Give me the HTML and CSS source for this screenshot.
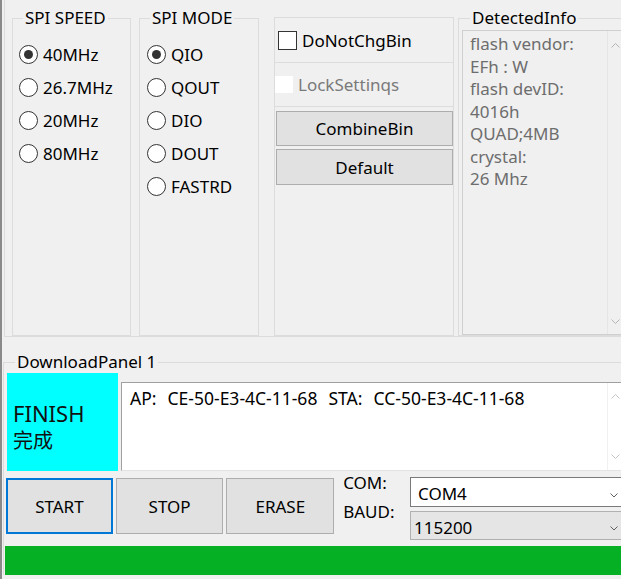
FILE: index.html
```html
<!DOCTYPE html>
<html lang="en">

<head>
    <meta charset="UTF-8">
    <title>SPI Download</title>
    <link rel="stylesheet" href="styles.css">
</head>

<body>
    <div class="top-panel">
        <fieldset class="group speed">
            <legend>SPI SPEED</legend>
            <div class="opt"><span class="radio on"></span>40MHz</div>
            <div class="opt"><span class="radio"></span>26.7MHz</div>
            <div class="opt"><span class="radio"></span>20MHz</div>
            <div class="opt"><span class="radio"></span>80MHz</div>
        </fieldset>
        <fieldset class="group mode">
            <legend>SPI MODE</legend>
            <div class="opt"><span class="radio on"></span>QIO</div>
            <div class="opt"><span class="radio"></span>QOUT</div>
            <div class="opt"><span class="radio"></span>DIO</div>
            <div class="opt"><span class="radio"></span>DOUT</div>
            <div class="opt"><span class="radio"></span>FASTRD</div>
        </fieldset>
        <div class="opts">
            <div class="check-row"><span class="check"></span>DoNotChgBin</div>
            <div class="lock-box"><span class="check disabled"></span>LockSettinqs</div>
            <button class="btn wide combine">CombineBin</button>
            <button class="btn wide">Default</button>
        </div>
        <fieldset class="group info">
            <legend>DetectedInfo</legend>
            <div class="info-box">
                <div class="info-text">flash vendor:<br>EFh : W<br>flash devID:<br>4016h<br>QUAD;4MB<br>crystal:<br>26 Mhz</div>
                <div class="scroll">
                    <svg width="9" height="5" viewBox="0 0 9 5"><polyline points="0.5,4.5 4.5,0.5 8.5,4.5" fill="none" stroke="#b4b4b4" /></svg>
                    <svg width="9" height="5" viewBox="0 0 9 5"><polyline points="0.5,0.5 4.5,4.5 8.5,0.5" fill="none" stroke="#b4b4b4" /></svg>
                </div>
            </div>
        </fieldset>
    </div>

    <fieldset class="download">
        <legend>DownloadPanel 1</legend>
        <div class="status-row">
            <div class="state">
                <div class="state-en">FINISH</div>
                <div class="state-cn">完成</div>
            </div>
            <div class="log">
                <div class="log-text">AP:  CE-50-E3-4C-11-68  STA:  CC-50-E3-4C-11-68</div>
                <div class="scroll log-scroll">
                    <svg width="9" height="5" viewBox="0 0 9 5"><polyline points="0.5,4.5 4.5,0.5 8.5,4.5" fill="none" stroke="#c4c4c4" /></svg>
                    <svg width="9" height="5" viewBox="0 0 9 5"><polyline points="0.5,0.5 4.5,4.5 8.5,0.5" fill="none" stroke="#c4c4c4" /></svg>
                </div>
            </div>
        </div>
        <div class="ctrl-row">
            <button class="btn big focus">START</button>
            <button class="btn big">STOP</button>
            <button class="btn big">ERASE</button>
            <div class="port-labels">
                <span>COM:</span>
                <span>BAUD:</span>
            </div>
            <div class="port-combos">
                <div class="combo com">
                    <span>COM4</span>
                    <svg width="8" height="5" viewBox="0 0 8 5"><polyline points="0.5,0.5 4,4 7.5,0.5" fill="none" stroke="#606060" /></svg>
                </div>
                <div class="combo baud">
                    <span>115200</span>
                    <svg width="8" height="5" viewBox="0 0 8 5"><polyline points="0.5,0.5 4,4 7.5,0.5" fill="none" stroke="#606060" /></svg>
                </div>
            </div>
        </div>
        <div class="progress"></div>
    </fieldset>
</body>

</html>
```

FILE: styles.css
```css
body {
    margin: 0;
    width: 621px;
    height: 579px;
    overflow: hidden;
    box-sizing: border-box;
    border-left: 2px solid #8a8a8a;
    background-color: #f0f0f0;
    font-family: "Noto Sans", "Noto Sans CJK SC", sans-serif;
    font-size: 17px;
    color: #000;
}

.top-panel {
    display: flex;
    align-items: stretch;
    height: 337px;
    box-sizing: border-box;
    margin-left: 2px;
    padding-left: 7px;
    border-left: 1px solid #dcdcdc;
    border-bottom: 1px solid #dcdcdc;
}

.top-panel > * {
    flex-shrink: 0;
}

fieldset {
    margin: 0;
    min-width: 0;
    box-sizing: border-box;
    border: 1px solid #dcdcdc;
}

legend {
    padding: 0 2px;
    line-height: 20px;
}

.group {
    margin-top: 8px;
    padding: 10px 0 0 6px;
}

.group legend {
    margin-left: 4px;
}

.speed {
    width: 119px;
}

.mode {
    width: 120px;
    margin-left: 8px;
    padding-left: 7px;
}

.mode legend {
    margin-left: 3px;
}

.opt {
    display: flex;
    align-items: center;
    gap: 5px;
    height: 33px;
}

.radio {
    width: 19px;
    height: 19px;
    box-sizing: border-box;
    border: 1px solid #333;
    border-radius: 50%;
    background: #fff;
    display: flex;
    align-items: center;
    justify-content: center;
}

.radio.on::after {
    content: "";
    width: 9px;
    height: 9px;
    border-radius: 50%;
    background: #333;
}

/* 체크박스 + 버튼 칸 */
.opts {
    width: 180px;
    margin: 17px 0 0 15px;
    box-sizing: border-box;
    border: 1px solid #dcdcdc;
    padding-top: 13px;
    display: flex;
    flex-direction: column;
}

.check-row {
    display: flex;
    align-items: center;
    gap: 5px;
    height: 19px;
    padding-left: 3px;
}

.check {
    width: 19px;
    height: 19px;
    box-sizing: border-box;
    border: 1px solid #333;
    background: #fff;
}

.check.disabled {
    width: 18px;
    height: 17px;
    border: none;
}

.lock-box {
    display: flex;
    align-items: center;
    gap: 5px;
    height: 45px;
    box-sizing: border-box;
    margin: 12px -1px 0 -1px;
    border: 1px solid #dcdcdc;
    color: #7a7a7a;
}

.btn {
    font-family: inherit;
    font-size: 17px;
    color: #000;
    background-color: #e1e1e1;
    border: 1px solid #adadad;
    padding: 0;
    box-sizing: border-box;
}

.btn.wide {
    width: 177px;
    height: 36px;
    margin: 3px 0 0 1px;
}

.btn.combine {
    height: 35px;
    margin-top: 4px;
}

/* 오른쪽 끝에서 잘린 칸 */
.info {
    flex: 1;
    margin-left: 4px;
    padding: 2px 0 0 3px;
    border-right: none;
}

.info legend {
    margin-left: 8px;
}

.info-box {
    display: flex;
    height: 305px;
    box-sizing: border-box;
    border: 1px solid #cfcfcf;
    border-right: none;
}

.info-text {
    width: 144px;
    flex-shrink: 0;
    box-sizing: border-box;
    padding: 2px 0 0 7px;
    line-height: 22.5px;
    color: #6d6d6d;
}

.scroll {
    flex: 1;
    display: flex;
    flex-direction: column;
    justify-content: space-between;
    align-items: flex-end;
    padding: 12px 1px 10px 0;
    border-left: 1px solid #e6e6e6;
}

.download {
    margin: 15px 0 0 1px;
    padding: 1px 0 0 3px;
    border-right: none;
    border-bottom: none;
}

.download legend {
    margin-left: 8px;
}

.status-row {
    display: flex;
    align-items: flex-start;
}

.state {
    width: 111px;
    height: 98px;
    flex-shrink: 0;
    box-sizing: border-box;
    padding: 27px 0 0 6px;
    background-color: #00ffff;
    color: #111;
    line-height: 27px;
}

.state-en {
    font-size: 22px;
}

.state-cn {
    font-size: 20px;
}

.log {
    flex: 1;
    display: flex;
    height: 89px;
    margin: 9px 0 0 3px;
    box-sizing: border-box;
    background: #fff;
    border: 1px solid #a0a0a0;
    border-bottom-color: #e3e3e3;
    border-right: none;
}

.log-text {
    width: 485px;
    flex-shrink: 0;
    box-sizing: border-box;
    padding: 4px 0 0 8px;
    font-size: 17.5px;
    word-spacing: 1px;
    line-height: 22px;
    white-space: pre;
}

.log-scroll {
    padding: 11px 1px 11px 0;
    border-left-color: #f0f0f0;
}

.ctrl-row {
    display: flex;
    align-items: flex-start;
    height: 56px;
    margin: 7px 0 0 -1px;
}

.btn.big {
    width: 108px;
    height: 56px;
    margin-left: 3px;
}

.btn.big.focus {
    width: 107px;
    margin-left: 0;
    border: 2px solid #0078d7;
}

.port-labels {
    width: 67px;
    margin: -5px 0 0 9px;
    display: flex;
    flex-direction: column;
    gap: 9px;
    line-height: 20px;
}

.port-combos {
    display: flex;
    flex-direction: column;
    gap: 4px;
    margin-top: -1px;
}

.combo {
    width: 211px;
    height: 30px;
    box-sizing: border-box;
    display: flex;
    justify-content: space-between;
    align-items: flex-start;
    padding: 6px 3px 0 7px;
    line-height: 20px;
    background: #fff;
    border: 1px solid #7a7a7a;
    border-right: none;
}

.combo svg {
    margin-top: 9px;
}

.combo.baud {
    height: 29px;
    padding-left: 3px;
    background: #e5e5e5;
    border-color: #b0b0b0;
}

.combo.baud svg {
    margin-top: 8px;
}

.progress {
    height: 29px;
    margin: 12px 0 0 -2px;
    background-color: #06b025;
}
```
